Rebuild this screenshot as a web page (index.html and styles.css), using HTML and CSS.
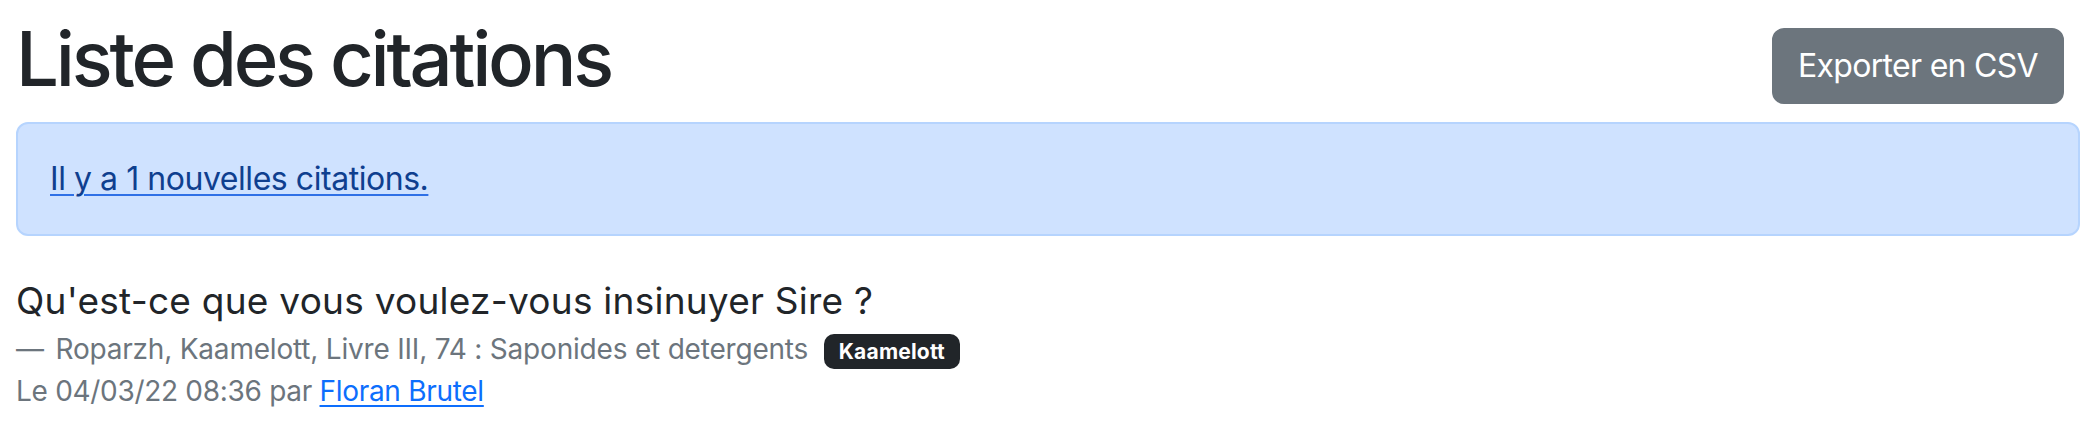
FILE: index.html
```html
<!DOCTYPE html>
<html lang="fr">
<head>
  <meta charset="UTF-8">
  <meta name="viewport" content="width=device-width, initial-scale=1.0">
  <title>Liste des citations</title>
  <link rel="stylesheet" href="styles.css">
</head>
<body>
  <div class="container">
    <div class="header">
      <h1>Liste des citations</h1>
      <a class="btn" href="#">Exporter en CSV</a>
    </div>

    <div class="alert">
      <a href="#">Il y a 1 nouvelles citations.</a>
    </div>

    <div class="quote">
      <p class="quote-text">Qu'est-ce que vous voulez-vous insinuyer Sire ?</p>
      <p class="quote-source">Roparzh, Kaamelott, Livre III, 74 : Saponides et detergents <span class="badge">Kaamelott</span></p>
      <p class="quote-meta">Le 04/03/22 08:36 par <a href="#">Floran Brutel</a></p>
    </div>
  </div>
</body>
</html>
```

FILE: styles.css
```css
body {
  margin: 0;
  font-family: Inter, "Noto Sans", sans-serif;
  font-size: 32px;
  line-height: 1.5;
  color: #212529;
  background: #fff;
}
.container {
  padding: 10px 18px 0 16px;
}
.header {
  display: flex;
  align-items: center;
  justify-content: space-between;
}
h1 {
  font-size: 76px;
  font-weight: 500;
  line-height: 96px;
  margin: 0 0 16px 0;
  letter-spacing: -3.2px;
}
.btn {
  display: inline-block;
  margin-right: 16px;
  padding: 12px 24px;
  font-size: 32px;
  line-height: 48px;
  letter-spacing: -0.7px;
  color: #fff;
  background: #6c757d;
  border: 2px solid #6c757d;
  border-radius: 12px;
  text-decoration: none;
}
.alert {
  margin-bottom: 32px;
  padding: 31px 32px;
  background: #cfe2ff;
  border: 2px solid #b6d4fe;
  border-radius: 12px;
}
.alert a {
  color: #0f3f8f;
  letter-spacing: -0.45px;
  text-decoration: underline;
  text-decoration-color: #2f70e6;
  text-decoration-thickness: 2px;
  text-underline-offset: 4px;
}
.quote {
  padding-top: 6px;
}
.quote p {
  margin: 0;
}
.quote-text {
  font-size: 37px;
  line-height: 54px;
  letter-spacing: 0.25px;
}
.quote-source {
  font-size: 28px;
  line-height: 42px;
  letter-spacing: -0.2px;
  color: #6c757d;
}
.quote-source::before {
  content: "\2014\00A0";
  margin-right: 4px;
}
.badge {
  display: inline-block;
  margin-left: 8px;
  padding: 7px 15px;
  font-size: 21px;
  font-weight: 700;
  line-height: 1;
  letter-spacing: 0.2px;
  color: #fff;
  background: #212529;
  border-radius: 10px;
}
.quote-meta {
  font-size: 28px;
  line-height: 42px;
  margin-top: 2px;
  letter-spacing: -0.3px;
  color: #6c757d;
}
.quote-meta a {
  color: #0d6efd;
  text-decoration-thickness: 2px;
  text-underline-offset: 4px;
}
```
